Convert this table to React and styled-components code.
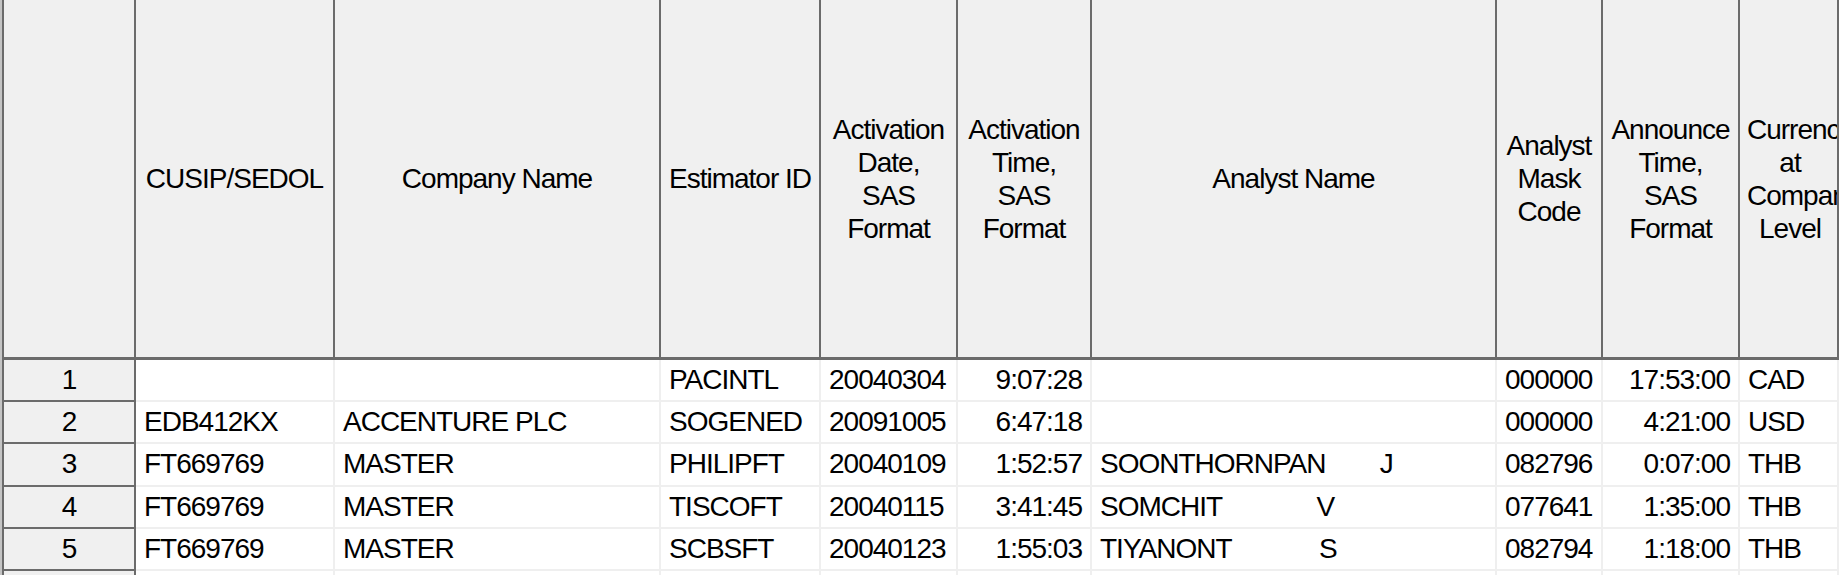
import React from "react";
import styled, { createGlobalStyle } from "styled-components";

const GlobalStyle = createGlobalStyle`
  html, body {
    margin: 0;
    padding: 0;
    background: #ffffff;
    overflow: hidden;
  }
  body {
    font-family: "Liberation Sans", Arial, sans-serif;
  }
`;

const columns = [
  { key: "cusip", title: ["CUSIP/SEDOL"], width: 199, align: "left" },
  { key: "company", title: ["Company Name"], width: 326, align: "left" },
  { key: "estimator", title: ["Estimator ID"], width: 160, align: "left" },
  { key: "actDate", title: ["Activation", "Date,", "SAS", "Format"], width: 137, align: "left" },
  { key: "actTime", title: ["Activation", "Time,", "SAS", "Format"], width: 134, align: "right" },
  { key: "analyst", title: ["Analyst Name"], width: 405, align: "left" },
  { key: "mask", title: ["Analyst", "Mask", "Code"], width: 106, align: "left" },
  { key: "annTime", title: ["Announce", "Time,", "SAS", "Format"], width: 137, align: "right" },
  { key: "currency", title: ["Currency", "at", "Company", "Level"], width: 99, align: "left" },
];

const rows = [
  { cusip: "", company: "", estimator: "PACINTL", actDate: "20040304", actTime: "9:07:28", analyst: "", mask: "000000", annTime: "17:53:00", currency: "CAD" },
  { cusip: "EDB412KX", company: "ACCENTURE PLC", estimator: "SOGENED", actDate: "20091005", actTime: "6:47:18", analyst: "", mask: "000000", annTime: "4:21:00", currency: "USD" },
  { cusip: "FT669769", company: "MASTER", estimator: "PHILIPFT", actDate: "20040109", actTime: "1:52:57", analyst: "SOONTHORNPAN        J", mask: "082796", annTime: "0:07:00", currency: "THB" },
  { cusip: "FT669769", company: "MASTER", estimator: "TISCOFT", actDate: "20040115", actTime: "3:41:45", analyst: "SOMCHIT              V", mask: "077641", annTime: "1:35:00", currency: "THB" },
  { cusip: "FT669769", company: "MASTER", estimator: "SCBSFT", actDate: "20040123", actTime: "1:55:03", analyst: "TIYANONT             S", mask: "082794", annTime: "1:18:00", currency: "THB" },
  { cusip: "", company: "", estimator: "", actDate: "", actTime: "", analyst: "", mask: "", annTime: "", currency: "" },
];

const Grid = styled.div`
  display: grid;
  grid-template-columns: 134px ${columns.map((c) => c.width + "px").join(" ")};
  grid-template-rows: 360px;
  grid-auto-rows: 42.2px;
  border-left: 2px solid #c4c4c4;
  width: max-content;
  font-size: 28px;
  letter-spacing: -1px;
  color: #000;
`;

const Corner = styled.div`
  box-sizing: border-box;
  background: #f0f0f0;
  border-left: 2px solid #6b6b6b;
  border-right: 2px solid #6b6b6b;
  border-bottom: 3px solid #6b6b6b;
`;

const HeadCell = styled.div`
  box-sizing: border-box;
  background: #f0f0f0;
  border-right: 2px solid #6b6b6b;
  border-bottom: 3px solid #6b6b6b;
  display: flex;
  flex-direction: column;
  justify-content: center;
  overflow: hidden;
  padding: 0 4px 0 ${(p) => (p.$clip ? "7px" : "4px")};
  line-height: 33px;
  text-align: center;
  white-space: nowrap;
`;

const RowHead = styled.div`
  box-sizing: border-box;
  background: #f0f0f0;
  border-left: 2px solid #6b6b6b;
  border-right: 2px solid #6b6b6b;
  border-bottom: 2px solid #6b6b6b;
  display: flex;
  align-items: center;
  justify-content: center;
`;

const Cell = styled.div`
  box-sizing: border-box;
  background: #fff;
  border-right: 2px solid #efefef;
  border-bottom: 2px solid #efefef;
  display: flex;
  align-items: center;
  justify-content: ${(p) => (p.$align === "right" ? "flex-end" : "flex-start")};
  padding: 0 8px;
  white-space: pre;
  overflow: hidden;
`;

export default function App() {
  return (
    <>
      <GlobalStyle />
      <Grid>
        <Corner />
        {columns.map((col) => (
          <HeadCell key={col.key} $clip={col.key === "currency"}>
            {col.title.map((line) => (
              <div key={line}>{line}</div>
            ))}
          </HeadCell>
        ))}
        {rows.map((row, i) => (
          <React.Fragment key={i}>
            <RowHead>{i < 5 ? i + 1 : ""}</RowHead>
            {columns.map((col) => (
              <Cell key={col.key} $align={col.align}>
                {row[col.key]}
              </Cell>
            ))}
          </React.Fragment>
        ))}
      </Grid>
    </>
  );
}
